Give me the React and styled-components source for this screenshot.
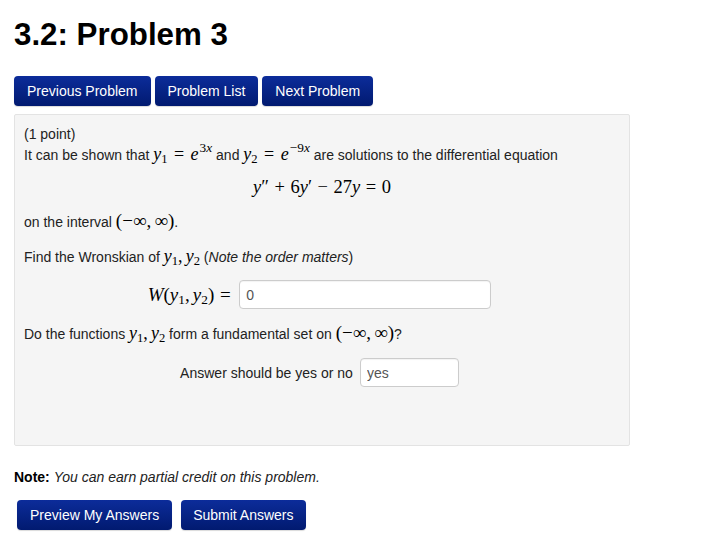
import React from "react";
import styled, { createGlobalStyle } from "styled-components";

const GlobalStyle = createGlobalStyle`
  body {
    margin: 0;
    background: #fff;
    font-family: "Liberation Sans", Arial, sans-serif;
    font-size: 14px;
    color: #333;
  }
`;

const App = () => {
  return (
    <Page>
      <GlobalStyle />
      <Title>3.2: Problem 3</Title>
      <NavBar>
        <NavButton>Previous Problem</NavButton>
        <NavButton>Problem List</NavButton>
        <NavButton>Next Problem</NavButton>
      </NavBar>

      <ProblemPanel>
        <Line>(1 point)</Line>
        <Line>
          It can be shown that{" "}
          <Math>
            <V>y</V>
            <Sub>1</Sub>
            <Op $wide>=</Op>
            <V>e</V>
            <Sup>
              3<V>x</V>
            </Sup>
          </Math>{" "}
          and{" "}
          <Math>
            <V>y</V>
            <Sub>2</Sub>
            <Op $wide>=</Op>
            <V>e</V>
            <Sup>
              −9<V>x</V>
            </Sup>
          </Math>{" "}
          are solutions to the differential equation
        </Line>
        <Display $top={13}>
          <Math $size={18.5}>
            <V>y</V>″<Op>+</Op>6<V>y</V>′<Op>−</Op>27<V>y</V>
            <Op>=</Op>0
          </Math>
        </Display>
        <Line $top={14}>
          on the interval{" "}
          <Math $size={19}>
            (−∞,<Thin />∞)
          </Math>
          .
        </Line>
        <Line $top={15}>
          Find the Wronskian of{" "}
          <Math>
            <V>y</V>
            <Sub>1</Sub>,<Thin />
            <V>y</V>
            <Sub>2</Sub>
          </Math>{" "}
          (<em>Note the order matters</em>)
        </Line>
        <AnswerRow $top={14}>
          <Math $size={19}>
            <V>W</V>(<V>y</V>
            <Sub>1</Sub>,<Thin />
            <V>y</V>
            <Sub>2</Sub>)<Op>=</Op>
          </Math>
          <AnswerInput $width={252} defaultValue="0" />
        </AnswerRow>
        <Line $top={14}>
          Do the functions{" "}
          <Math>
            <V>y</V>
            <Sub>1</Sub>,<Thin />
            <V>y</V>
            <Sub>2</Sub>
          </Math>{" "}
          form a fundamental set on{" "}
          <Math $size={19}>
            (−∞,<Thin />∞)
          </Math>
          ?
        </Line>
        <AnswerRow $top={15} $gap={7}>
          <span>Answer should be yes or no</span>
          <AnswerInput $width={99} defaultValue="yes" />
        </AnswerRow>
      </ProblemPanel>

      <Note>
        <strong>Note:</strong> <em>You can earn partial credit on this problem.</em>
      </Note>
      <SubmitBar>
        <NavButton $pad={13}>Preview My Answers</NavButton>
        <NavButton $pad={12}>Submit Answers</NavButton>
      </SubmitBar>
    </Page>
  );
};

export default App;

const Page = styled.div`
  padding: 17px 14px 20px;
  width: 616px;
`;

const Title = styled.h1`
  margin: 0 0 24px;
  font-size: 31.3px;
  line-height: 35px;
  font-weight: bold;
  color: #000;
`;

const NavBar = styled.div`
  display: flex;
  gap: 4px;
`;

const NavButton = styled.button`
  height: 30px;
  padding: 0 ${(p) => p.$pad ?? 13}px;
  border: none;
  border-radius: 4px;
  background: linear-gradient(to bottom, #0c2c9a, #011a70);
  color: #fff;
  font-family: "Liberation Sans", Arial, sans-serif;
  font-size: 14px;
  line-height: 30px;
  cursor: pointer;
  box-shadow: 0 1px 1px rgba(0, 0, 0, 0.15);
`;

const ProblemPanel = styled.div`
  margin-top: 8px;
  padding: 9px 9px 58px;
  background: #f5f5f5;
  border: 1px solid #e3e3e3;
  border-radius: 2px;
  color: #222;
`;

const Line = styled.div`
  margin-top: ${(p) => p.$top ?? 0}px;
  line-height: 20px;
  height: 20px;
  white-space: nowrap;
`;

const Display = styled.div`
  margin-top: ${(p) => p.$top ?? 0}px;
  height: 20px;
  line-height: 20px;
  text-align: center;
`;

const AnswerRow = styled.div`
  margin-top: ${(p) => p.$top ?? 0}px;
  display: flex;
  align-items: center;
  justify-content: center;
  gap: ${(p) => p.$gap ?? 3}px;
  height: 29px;
  padding-right: 5px;
`;

const Math = styled.span`
  font-family: "Liberation Serif", "Times New Roman", serif;
  font-size: ${(p) => p.$size ?? 18}px;
  color: #000;
  white-space: nowrap;
`;

const V = styled.i`
  font-style: italic;
`;

const Sub = styled.sub`
  font-size: 70%;
  line-height: 0;
  vertical-align: -0.25em;
`;

const Sup = styled.sup`
  font-size: 74%;
  line-height: 0;
  vertical-align: 0.6em;
  margin-left: 1px;
`;

const Op = styled.span`
  margin: 0 ${(p) => (p.$wide ? 0.36 : 0.3)}em;
`;

const Thin = styled.span`
  display: inline-block;
  width: 0.17em;
`;

const AnswerInput = styled.input`
  box-sizing: border-box;
  width: ${(p) => p.$width}px;
  height: 29px;
  padding: 0 6px;
  border: 1px solid #ccc;
  border-radius: 4px;
  background: #fff;
  color: #555;
  font-family: "Liberation Sans", Arial, sans-serif;
  font-size: 14px;
  box-shadow: inset 0 1px 1px rgba(0, 0, 0, 0.05);
`;

const Note = styled.div`
  margin-top: 21px;
  line-height: 20px;
  color: #222;

  strong {
    color: #000;
  }
`;

const SubmitBar = styled.div`
  display: flex;
  gap: 9px;
  margin: 13px 0 0 3px;
`;
